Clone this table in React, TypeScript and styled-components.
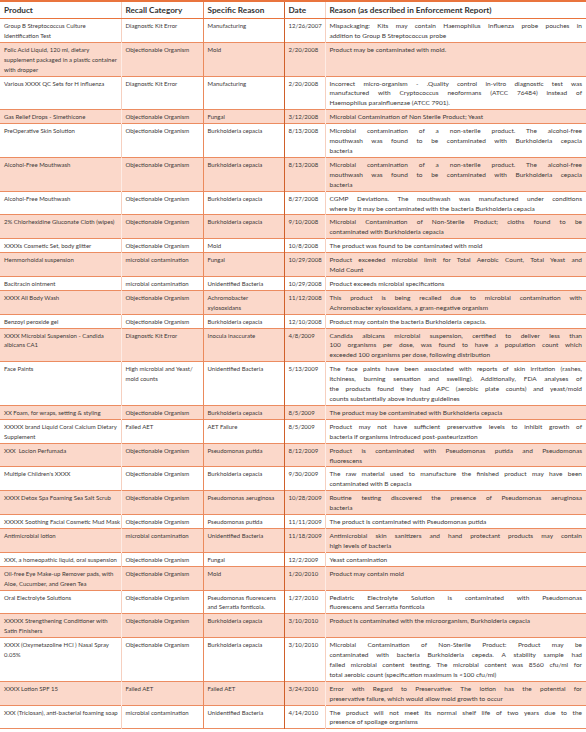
import React from "react";
import styled, { createGlobalStyle } from "styled-components";

const GlobalStyle = createGlobalStyle`
  html, body {
    margin: 0;
    padding: 0;
    background: #ffffff;
  }
  body {
    font-family: Lato, "Liberation Sans", sans-serif;
  }
`;

// "\n" marks the line breaks of the printed report; in the reason column
// every line except the last is set full width (justified)
interface Recall {
  product: string;
  category: string;
  specific: string;
  date: string;
  reason: string;
}

const recalls: Recall[] = [
  {
    product: "Group B Streptococcus Culture\nIdentification Test",
    category: "Diagnostic Kit Error",
    specific: "Manufacturing",
    date: "12/26/2007",
    reason: "Mispackaging: Kits may contain Haemophilus Influenza probe pouches in\naddition to Group B Streptococcus probe",
  },
  {
    product: "Folic Acid Liquid, 120 ml, dietary\nsupplement packaged in a plastic container\nwith dropper",
    category: "Objectionable Organism",
    specific: "Mold",
    date: "2/20/2008",
    reason: "Product may be contaminated with mold.",
  },
  {
    product: "Various XXXX QC Sets for H influenza",
    category: "Diagnostic Kit Error",
    specific: "Manufacturing",
    date: "2/20/2008",
    reason: "Incorrect micro-organism - .Quality control in-vitro diagnostic test was\nmanufactured with Cryptococcus neoformans (ATCC 76484) instead of\nHaemophilus parainfluenzae (ATCC 7901).",
  },
  {
    product: "Gas Relief Drops - Simethicone",
    category: "Objectionable Organism",
    specific: "Fungal",
    date: "3/12/2008",
    reason: "Microbial Contamination of Non Sterile Product; Yeast",
  },
  {
    product: "PreOperative Skin Solution",
    category: "Objectionable Organism",
    specific: "Burkholderia cepacia",
    date: "8/13/2008",
    reason: "Microbial contamination of a non-sterile product. The alcohol-free\nmouthwash was found to be contaminated with Burkholderia cepacia\nbacteria",
  },
  {
    product: "Alcohol-Free Mouthwash",
    category: "Objectionable Organism",
    specific: "Burkholderia cepacia",
    date: "8/13/2008",
    reason: "Microbial contamination of a non-sterile product. The alcohol-free\nmouthwash was found to be contaminated with Burkholderia cepacia\nbacteria",
  },
  {
    product: "Alcohol-Free Mouthwash",
    category: "Objectionable Organism",
    specific: "Burkholderia cepacia",
    date: "8/27/2008",
    reason: "CGMP Deviations. The mouthwash was manufactured under conditions\nwhere by it may be contaminated with the bacteria Burkholderia cepacia",
  },
  {
    product: "2% Chlorhexidine Gluconate Cloth (wipes)",
    category: "Objectionable Organism",
    specific: "Burkholderia cepacia",
    date: "9/10/2008",
    reason: "Microbial Contamination of Non-Sterile Product; cloths found to be\ncontaminated with Burkholderia cepacia",
  },
  {
    product: "XXXXs Cosmetic Set, body glitter",
    category: "Objectionable Organism",
    specific: "Mold",
    date: "10/8/2008",
    reason: "The product was found to be contaminated with mold",
  },
  {
    product: "Hemmorhoidal suspension",
    category: "microbial contamination",
    specific: "Fungal",
    date: "10/29/2008",
    reason: "Product exceeded microbial limit for Total Aerobic Count, Total Yeast and\nMold Count",
  },
  {
    product: "Bacitracin ointment",
    category: "microbial contamination",
    specific: "Unidentified Bacteria",
    date: "10/29/2008",
    reason: "Product exceeds microbial specifications",
  },
  {
    product: "XXXX All Body Wash",
    category: "Objectionable Organism",
    specific: "Achromobacter\nxylosoxidans",
    date: "11/12/2008",
    reason: "This product is being recalled due to microbial contamination with\nAchromobacter xylosoxidans, a gram-negative organism",
  },
  {
    product: "Benzoyl peroxide gel",
    category: "Objectionable Organism",
    specific: "Burkholderia cepacia",
    date: "12/10/2008",
    reason: "Product may contain the bacteria Burkholderia cepacia.",
  },
  {
    product: "XXXX Microbial Suspension - Candida\nalbicans CA1",
    category: "Diagnostic Kit Error",
    specific: "Inocula inaccurate",
    date: "4/8/2009",
    reason: "Candida albicans microbial suspension, certified to deliver less than\n100 organisms per dose, was found to have a population count which\nexceeded 100 organisms per dose, following distribution",
  },
  {
    product: "Face Paints",
    category: "High microbial and Yeast/\nmold counts",
    specific: "Unidentified Bacteria",
    date: "5/13/2009",
    reason: "The face paints have been associated with reports of skin irritation (rashes,\nitchiness, burning sensation and swelling). Additionally, FDA analyses of\nthe products found they had APC (aerobic plate counts) and yeast/mold\ncounts substantially above industry guidelines",
  },
  {
    product: "XX Foam, for wraps, setting & styling",
    category: "Objectionable Organism",
    specific: "Burkholderia cepacia",
    date: "8/5/2009",
    reason: "The product may be contaminated with Burkholderia cepacia",
  },
  {
    product: "XXXXX brand Liquid Coral Calcium Dietary\nSupplement",
    category: "Failed AET",
    specific: "AET Failure",
    date: "8/5/2009",
    reason: "Product may not have sufficient preservative levels to inhibit growth of\nbacteria if organisms introduced post-pasteurization",
  },
  {
    product: "XXX  Locion Perfumada",
    category: "Objectionable Organism",
    specific: "Pseudomonas putida",
    date: "8/12/2009",
    reason: "Product is contaminated with Pseudomonas putida and Pseudomonas\nfluorescens",
  },
  {
    product: "Multiple Children's XXXX",
    category: "Objectionable Organism",
    specific: "Burkholderia cepacia",
    date: "9/30/2009",
    reason: "The raw material used to manufacture the finished product may have been\ncontaminated with B cepacia",
  },
  {
    product: "XXXX Detox Spa Foaming Sea Salt Scrub",
    category: "Objectionable Organism",
    specific: "Pseudomonas aeruginosa",
    date: "10/28/2009",
    reason: "Routine testing discovered the presence of Pseudomonas aeruginosa\nbacteria",
  },
  {
    product: "XXXXX Soothing Facial Cosmetic Mud Mask",
    category: "Objectionable Organism",
    specific: "Pseudomonas putida",
    date: "11/11/2009",
    reason: "The product is contaminated with Pseudomonas putida",
  },
  {
    product: "Antimicrobial lotion",
    category: "microbial contamination",
    specific: "Unidentified Bacteria",
    date: "11/18/2009",
    reason: "Antimicrobial skin sanitizers and hand protectant products may contain\nhigh levels of bacteria",
  },
  {
    product: "XXX, a homeopathic liquid, oral suspension",
    category: "Objectionable Organism",
    specific: "Fungal",
    date: "12/2/2009",
    reason: "Yeast contamination",
  },
  {
    product: "Oil-free Eye Make-up Remover pads, with\nAloe, Cucumber, and Green Tea",
    category: "Objectionable Organism",
    specific: "Mold",
    date: "1/20/2010",
    reason: "Product may contain mold",
  },
  {
    product: "Oral Electrolyte Solutions",
    category: "Objectionable Organism",
    specific: "Pseudomonas fluorescens\nand Serratia fonticola.",
    date: "1/27/2010",
    reason: "Pediatric Electrolyte Solution is contaminated with Pseudomonas\nfluorescens and Serratia fonticola",
  },
  {
    product: "XXXXX Strengthening Conditioner with\nSatin Finishers",
    category: "Objectionable Organism",
    specific: "Burkholderia cepacia",
    date: "3/10/2010",
    reason: "Product is contaminated with the microorganism, Burkholderia cepacia",
  },
  {
    product: "XXXX (Oxymetazoline HCl ) Nasal Spray\n0.05%",
    category: "Objectionable Organism",
    specific: "Burkholderia cepacia",
    date: "3/10/2010",
    reason: "Microbial Contamination of Non-Sterile Product: Product may be\ncontaminated with bacteria Burkholderia cepeda. A stability sample had\nfailed microbial content testing. The microbial content was 8560 cfu/ml for\ntotal aerobic count (specification maximum is <100 cfu/ml)",
  },
  {
    product: "XXXX Lotion SPF 15",
    category: "Failed AET",
    specific: "Failed AET",
    date: "3/24/2010",
    reason: "Error with Regard to Preservative: The lotion has the potential for\npreservative failure, which would allow mold growth to occur",
  },
  {
    product: "XXX (Triclosan), anti-bacterial foaming soap",
    category: "microbial contamination",
    specific: "Unidentified Bacteria",
    date: "4/14/2010",
    reason: "The product will not meet its normal shelf life of two years due to the\npresence of spoilage organisms",
  },
];

// column widths, px
const widths = [121, 82, 81, 41, 261];

// divider on the right side of each column
type Divider = "soft" | "orange" | "strong" | "none";
const dividers: Divider[] = ["soft", "orange", "strong", "soft", "none"];

const border = (d: Divider, tinted: boolean) =>
  d === "strong"
    ? "1.5px solid #d0602a"
    : d === "orange"
    ? "1px solid #eb8a5c"
    : d === "soft"
    ? `1px solid ${tinted ? "#fdece5" : "#f6d0c0"}`
    : "none";

const Page = styled.div`
  width: 586px;
  box-shadow: 0 2px 3px rgba(0, 0, 0, 0.35);
`;

const Table = styled.table`
  width: 586px;
  table-layout: fixed;
  border-collapse: collapse;
  border-top: 2px solid #e9743d;
`;

const HeadCell = styled.th<{ $divider: Divider }>`
  height: 16px;
  padding: 0 4px;
  text-align: left;
  font-size: 8.2px;
  font-weight: 700;
  color: #333333;
  background: #ffffff;
  border-bottom: 1.5px solid #e9743d;
  border-right: ${({ $divider }) => border($divider, false)};
`;

const Row = styled.tr<{ $tinted: boolean }>`
  background: ${({ $tinted }) => ($tinted ? "#fbd8ca" : "#ffffff")};
  border-bottom: 1px solid #ec8c61;
`;

const Cell = styled.td<{ $divider: Divider; $tinted: boolean }>`
  vertical-align: top;
  padding: 2px 2px 1px 4px;
  font-size: 6px;
  line-height: 9.9px;
  color: #3c3838;
  white-space: pre;
  border-right: ${({ $divider, $tinted }) => border($divider, $tinted)};
`;

const ReasonCell = styled(Cell)`
  white-space: normal;
  padding-right: 4px;
  font-size: 6.5px;
`;

const Line = styled.span<{ $full: boolean }>`
  display: block;
  white-space: nowrap;
  text-align: ${({ $full }) => ($full ? "justify" : "left")};
  text-align-last: ${({ $full }) => ($full ? "justify" : "auto")};
`;

const headings = ["Product", "Recall Category", "Specific Reason", "Date", "Reason (as described in Enforcement Report)"];

function Reason({ text }: { text: string }) {
  const lines = text.split("\n");
  return (
    <>
      {lines.map((l, i) => (
        <Line key={i} $full={i < lines.length - 1}>
          {l}
        </Line>
      ))}
    </>
  );
}

export default function App() {
  return (
    <>
      <GlobalStyle />
      <Page>
        <Table>
          <colgroup>
            {widths.map((w, i) => (
              <col key={i} style={{ width: w }} />
            ))}
          </colgroup>
          <thead>
            <tr>
              {headings.map((h, i) => (
                <HeadCell key={h} $divider={dividers[i]}>
                  {h}
                </HeadCell>
              ))}
            </tr>
          </thead>
          <tbody>
            {recalls.map((r, idx) => {
              const tinted = idx % 2 === 1;
              const values = [r.product, r.category, r.specific, r.date];
              return (
                <Row key={idx} $tinted={tinted}>
                  {values.map((v, i) => (
                    <Cell key={i} $divider={dividers[i]} $tinted={tinted}>
                      {v}
                    </Cell>
                  ))}
                  <ReasonCell $divider="none" $tinted={tinted}>
                    <Reason text={r.reason} />
                  </ReasonCell>
                </Row>
              );
            })}
          </tbody>
        </Table>
      </Page>
    </>
  );
}
